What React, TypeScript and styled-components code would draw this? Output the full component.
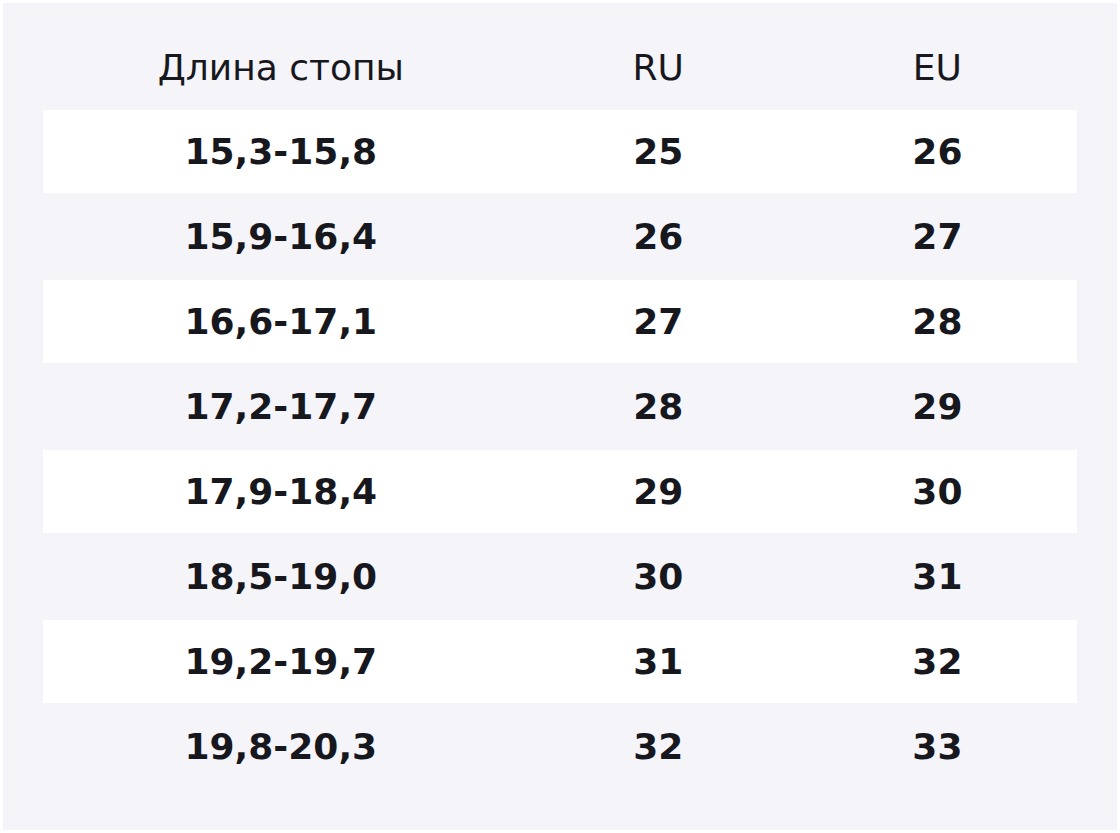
import styled, { createGlobalStyle } from "styled-components";

const GlobalStyle = createGlobalStyle`
    html, body {
        margin: 0;
        padding: 0;
        background: #ffffff;
    }
    body {
        font-family: "DejaVu Sans", "Noto Sans", sans-serif;
        color: #17171e;
    }
`;

const Page = styled.div`
    padding: 3px;
`;

const Panel = styled.section`
    background-color: #f4f4f9;
    height: 827px;
    box-sizing: border-box;
    padding: 22px 40px 0;
`;

const Table = styled.table`
    width: 100%;
    border-collapse: separate;
    border-spacing: 0;
    table-layout: fixed;
`;

const HeadCell = styled.th<{ $width: string }>`
    width: ${(p) => p.$width};
    height: 85px;
    padding: 0;
    font-size: 36px;
    font-weight: 400;
    text-align: center;
    vertical-align: middle;
`;

const Cell = styled.td<{ $striped?: boolean }>`
    height: 83px;
    padding: 0;
    border-bottom: 2px solid transparent;
    background-color: ${(p) => (p.$striped ? "#ffffff" : "transparent")};
    background-clip: padding-box;
    font-size: 36px;
    font-weight: 700;
    text-align: center;
    vertical-align: middle;
`;

const sizes = [
    ["15,3-15,8", "25", "26"],
    ["15,9-16,4", "26", "27"],
    ["16,6-17,1", "27", "28"],
    ["17,2-17,7", "28", "29"],
    ["17,9-18,4", "29", "30"],
    ["18,5-19,0", "30", "31"],
    ["19,2-19,7", "31", "32"],
    ["19,8-20,3", "32", "33"],
];

const App: React.FC = () => {
    return (
        <Page>
            <GlobalStyle />
            <Panel>
                <Table>
                    <thead>
                        <tr>
                            <HeadCell $width="46%">Длина стопы</HeadCell>
                            <HeadCell $width="27%">RU</HeadCell>
                            <HeadCell $width="27%">EU</HeadCell>
                        </tr>
                    </thead>
                    <tbody>
                        {sizes.map((row, i) => (
                            <tr key={row[0]}>
                                {row.map((value, j) => (
                                    <Cell key={j} $striped={i % 2 === 0}>
                                        {value}
                                    </Cell>
                                ))}
                            </tr>
                        ))}
                    </tbody>
                </Table>
            </Panel>
        </Page>
    );
};

export default App;
